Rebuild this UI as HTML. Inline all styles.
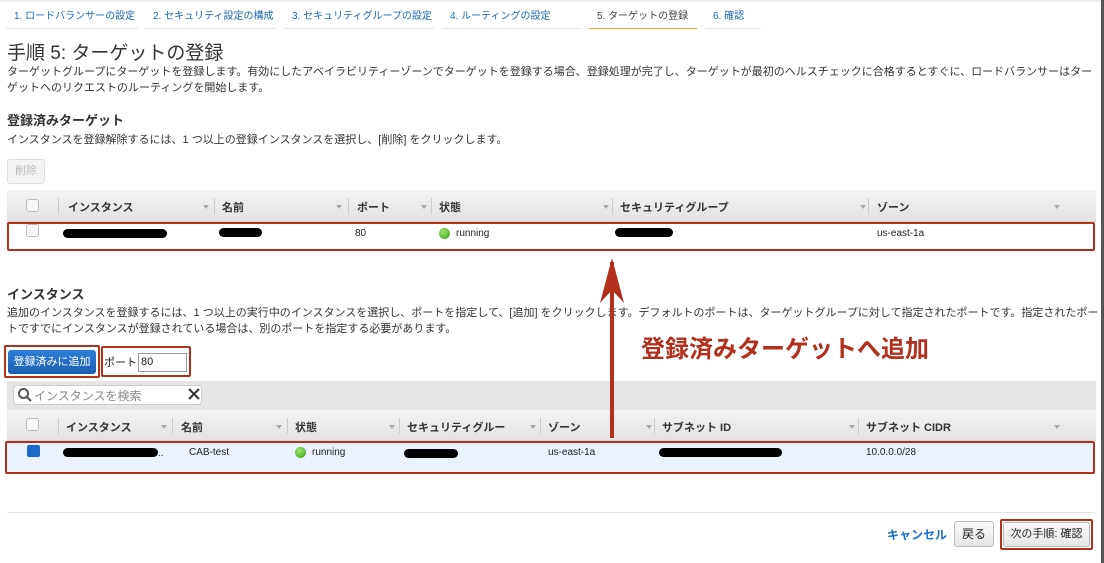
<!DOCTYPE html>
<html><head><meta charset="utf-8"><style>
*{margin:0;padding:0;box-sizing:border-box}
body{width:1104px;height:563px;background:#fff;font-family:"Liberation Sans","Noto Sans CJK JP",sans-serif;color:#222;position:relative;overflow:hidden;font-size:11px}
.a{position:absolute;white-space:nowrap}
.tab{position:absolute;top:7px;height:22px;font-size:10px;color:#1a66b0;border-bottom:1px solid #e4e4e4;padding-left:8px;line-height:20px}
.hdr{position:absolute;background:linear-gradient(#f3f3f3,#e3e3e3);border-bottom:1px solid #d5d5d5}
.th{position:absolute;font-weight:bold;font-size:11px;color:#333}
.sep{position:absolute;width:1px;height:16px;background:#ccc}
.tri{position:absolute;width:0;height:0;border-left:3px solid transparent;border-right:3px solid transparent;border-top:4px solid #aaa}
.cb{position:absolute;width:13px;height:13px;border:1px solid #bbb;border-radius:3px;background:#f6f6f6}
.blk{position:absolute;height:9px;background:#000;border-radius:5px}
.dot{position:absolute;width:11px;height:11px;border-radius:50%;background:radial-gradient(circle at 40% 35%,#9be36a,#3aa21a)}
.red{position:absolute;border:2px solid #b3301c;border-radius:2px}
</style></head><body>
<div class="a" style="left:0;top:0;width:1104px;height:2px;background:#eee"></div>
<div class="tab" style="left:6px;width:132px">1. ロードバランサーの設定</div>
<div class="tab" style="left:145px;width:131px">2. セキュリティ設定の構成</div>
<div class="tab" style="left:284px;width:150px">3. セキュリティグループの設定</div>
<div class="tab" style="left:442px;width:139px">4. ルーティングの設定</div>
<div class="tab" style="left:589px;width:108px;color:#444;border-bottom:1px solid #f0a020">5. ターゲットの登録</div>
<div class="tab" style="left:705px;width:56px">6. 確認</div>
<div class="a" style="left:7px;top:38px;font-size:19px;color:#333">手順 5: ターゲットの登録</div>
<div class="a" style="left:7px;top:64px;font-size:11px;line-height:16px;color:#333;white-space:normal;width:1095px">ターゲットグループにターゲットを登録します。有効にしたアベイラビリティーゾーンでターゲットを登録する場合、登録処理が完了し、ターゲットが最初のヘルスチェックに合格するとすぐに、ロードバランサーはターゲットへのリクエストのルーティングを開始します。</div>
<div class="a" style="left:7px;top:110px;font-size:13px;font-weight:bold;color:#333">登録済みターゲット</div>
<div class="a" style="left:7px;top:131px;font-size:11px;color:#333">インスタンスを登録解除するには、1 つ以上の登録インスタンスを選択し、[削除] をクリックします。</div>
<div class="a" style="left:7px;top:159px;width:38px;height:25px;border:1px solid #ddd;border-radius:3px;background:#f3f3f3;color:#bbb;font-size:11px;text-align:center;line-height:23px">削除</div>
<div class="hdr" style="left:7px;top:190px;width:1089px;height:32px"></div>
<div class="cb" style="left:26px;top:199px"></div>
<div class="sep" style="left:58px;top:198px"></div><div class="th" style="left:68px;top:199px">インスタンス</div><div class="tri" style="left:203px;top:205px"></div>
<div class="sep" style="left:214px;top:198px"></div><div class="th" style="left:222px;top:199px">名前</div><div class="tri" style="left:336px;top:205px"></div>
<div class="sep" style="left:348px;top:198px"></div><div class="th" style="left:357px;top:199px">ポート</div><div class="tri" style="left:421px;top:205px"></div>
<div class="sep" style="left:431px;top:198px"></div><div class="th" style="left:439px;top:199px">状態</div><div class="tri" style="left:603px;top:205px"></div>
<div class="sep" style="left:612px;top:198px"></div><div class="th" style="left:620px;top:199px">セキュリティグループ</div><div class="tri" style="left:860px;top:205px"></div>
<div class="sep" style="left:868px;top:198px"></div><div class="th" style="left:877px;top:199px">ゾーン</div><div class="tri" style="left:1054px;top:205px"></div>
<div class="red" style="left:7px;top:222px;width:1088px;height:29px"></div>
<div class="cb" style="left:26px;top:224px"></div>
<div class="blk" style="left:63px;top:229px;width:104px"></div>
<div class="blk" style="left:219px;top:228px;width:43px"></div>
<div class="a" style="left:355px;top:228px;font-size:10px">80</div>
<div class="dot" style="left:439px;top:228px"></div><div class="a" style="left:456px;top:228px;font-size:10px">running</div>
<div class="blk" style="left:615px;top:228px;width:58px"></div>
<div class="a" style="left:877px;top:228px;font-size:10px">us-east-1a</div>
<div class="a" style="left:7px;top:284px;font-size:13px;font-weight:bold;color:#333">インスタンス</div>
<div class="a" style="left:7px;top:305px;font-size:11px;line-height:16px;color:#333;white-space:normal;width:1095px">追加のインスタンスを登録するには、1 つ以上の実行中のインスタンスを選択し、ポートを指定して、[追加] をクリックします。デフォルトのポートは、ターゲットグループに対して指定されたポートです。指定されたポートですでにインスタンスが登録されている場合は、別のポートを指定する必要があります。</div>
<div class="red" style="left:4px;top:345px;width:96px;height:33px"></div>
<div class="a" style="left:8px;top:350px;width:88px;height:24px;background:linear-gradient(#2d7fd8,#1a5eb0);border-radius:3px;color:#fff;font-size:11px;text-align:center;line-height:24px">登録済みに追加</div>
<div class="red" style="left:101px;top:346px;width:90px;height:31px"></div>
<div class="a" style="left:104px;top:354px;font-size:11px">ポート</div>
<div class="a" style="left:138px;top:353px;width:49px;height:19px;border:1px solid #999;font-size:11px;padding-left:2px;line-height:17px">80</div>
<div class="a" style="left:7px;top:381px;width:1089px;height:29px;background:#e6e6e6"></div>
<div class="a" style="left:13px;top:385px;width:189px;height:20px;border:1px solid #ccc;border-radius:4px;background:#fff"></div>
<svg class="a" style="left:17px;top:387px" width="16" height="16" viewBox="0 0 16 16"><circle cx="6.5" cy="6.5" r="4.5" fill="none" stroke="#555" stroke-width="2"/><path d="M10 10l4 4" stroke="#555" stroke-width="2.2"/></svg>
<div class="a" style="left:34px;top:387px;font-size:12px;color:#888">インスタンスを検索</div>
<svg class="a" style="left:188px;top:388px" width="12" height="12" viewBox="0 0 12 12"><path d="M1 1l10 10M11 1L1 11" stroke="#333" stroke-width="2"/></svg>
<div class="hdr" style="left:7px;top:410px;width:1089px;height:31px"></div>
<div class="cb" style="left:26px;top:418px"></div>
<div class="sep" style="left:58px;top:418px"></div><div class="th" style="left:66px;top:419px">インスタンス</div><div class="tri" style="left:161px;top:425px"></div>
<div class="sep" style="left:172px;top:418px"></div><div class="th" style="left:181px;top:419px">名前</div><div class="tri" style="left:276px;top:425px"></div>
<div class="sep" style="left:287px;top:418px"></div><div class="th" style="left:295px;top:419px">状態</div><div class="tri" style="left:389px;top:425px"></div>
<div class="sep" style="left:399px;top:418px"></div><div class="th" style="left:407px;top:419px">セキュリティグルー</div><div class="tri" style="left:530px;top:425px"></div>
<div class="sep" style="left:540px;top:418px"></div><div class="th" style="left:548px;top:419px">ゾーン</div><div class="tri" style="left:646px;top:425px"></div>
<div class="sep" style="left:654px;top:418px"></div><div class="th" style="left:662px;top:419px">サブネット ID</div><div class="tri" style="left:849px;top:425px"></div>
<div class="sep" style="left:858px;top:418px"></div><div class="th" style="left:866px;top:419px">サブネット CIDR</div><div class="tri" style="left:1054px;top:425px"></div>
<div class="a" style="left:7px;top:441px;width:1087px;height:33px;background:#eaf3fd"></div>
<div class="red" style="left:5px;top:441px;width:1090px;height:33px"></div>
<div class="a" style="left:27px;top:445px;width:13px;height:12px;background:#1b6ac9;border-radius:2px"></div>
<div class="blk" style="left:63px;top:448px;width:95px"></div><div class="a" style="left:158px;top:448px;font-size:10px">..</div>
<div class="a" style="left:189px;top:447px;font-size:10px">CAB-test</div>
<div class="dot" style="left:295px;top:447px"></div><div class="a" style="left:312px;top:447px;font-size:10px">running</div>
<div class="blk" style="left:404px;top:449px;width:54px"></div>
<div class="a" style="left:548px;top:447px;font-size:10px">us-east-1a</div>
<div class="blk" style="left:659px;top:448px;width:123px"></div>
<div class="a" style="left:866px;top:447px;font-size:10px">10.0.0.0/28</div>
<div class="a" style="left:610px;top:262px;width:4px;height:176px;background:#b3301c"></div>
<svg class="a" style="left:596px;top:256px" width="32" height="50" viewBox="0 0 32 50"><path d="M16 2 L4 47 L16 34 L28 47 Z" fill="#b3301c"/></svg>
<div class="a" style="left:641px;top:329px;font-size:24px;font-weight:bold;color:#b3301c">登録済みターゲットへ追加</div>
<div class="a" style="left:7px;top:512px;width:1089px;height:1px;background:#e4e4e4"></div>
<div class="a" style="left:887px;top:526px;font-size:12px;color:#1a72d0;font-weight:bold">キャンセル</div>
<div class="a" style="left:954px;top:521px;width:40px;height:26px;border:1px solid #bbb;border-radius:3px;background:linear-gradient(#fafafa,#e6e6e6);font-size:12px;text-align:center;line-height:24px">戻る</div>
<div class="red" style="left:1000px;top:519px;width:93px;height:31px"></div>
<div class="a" style="left:1003px;top:522px;width:87px;height:25px;border:1px solid #bbb;border-radius:3px;background:linear-gradient(#fafafa,#e6e6e6);font-size:11px;text-align:center;line-height:23px">次の手順: 確認</div>
<div class="a" style="left:1101px;top:0;width:3px;height:563px;background:#555"></div>
</body></html>
